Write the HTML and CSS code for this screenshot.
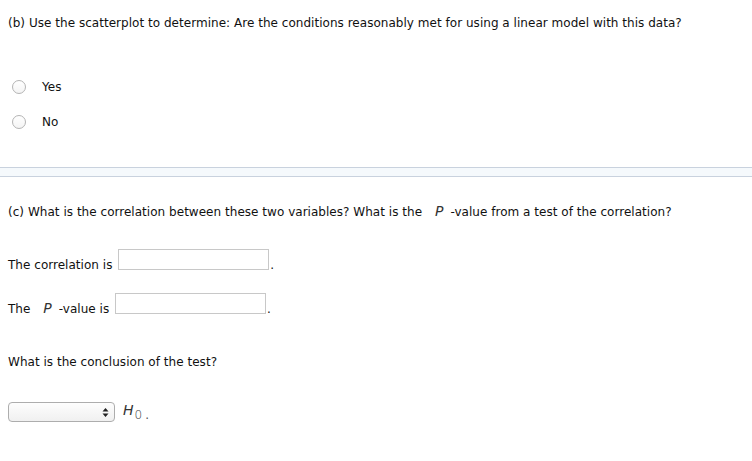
FILE: index.html
```html
<!DOCTYPE html>
<html>
<head>
<meta charset="utf-8">
<link rel="stylesheet" href="styles.css">
</head>
<body>
<div class="part part-b">
  <p class="question">(b) Use the scatterplot to determine: Are the conditions reasonably met for using a linear model with this data?</p>
  <div class="options">
    <label class="option"><span class="radio"></span><span>Yes</span></label>
    <label class="option"><span class="radio"></span><span>No</span></label>
  </div>
</div>
<div class="divider"></div>
<div class="part part-c">
  <p class="question">(c) What is the correlation between these two variables? What is the <span class="math">P</span>-value from a test of the correlation?</p>
  <div class="row row-corr">The correlation is <span class="box"></span><span class="dot">.</span></div>
  <div class="row row-p">The <span class="math">P</span>-value is <span class="box"></span><span class="dot">.</span></div>
  <p class="question q-conc">What is the conclusion of the test?</p>
  <div class="row-sel">
    <span class="select"><svg class="arrows" width="7" height="11" viewBox="0 0 7 11"><path d="M3.5 1 L6.5 4.5 L0.5 4.5 Z M3.5 10 L6.5 6.5 L0.5 6.5 Z" fill="#222"/></svg></span>
    <span class="h0"><i>H</i><sub>0</sub></span><span class="dot2">.</span>
  </div>
</div>
</body>
</html>
```
FILE: styles.css
```css
html, body {
  margin: 0;
  padding: 0;
  background: #fff;
}
body {
  font-family: Verdana, "DejaVu Sans", sans-serif;
  font-size: 12px;
  letter-spacing: 0.03px;
  color: #111;
}
.question {
  margin: 0;
  line-height: 16px;
}
.part-b {
  padding: 15px 8px 0 8px;
  height: 152px;
}
.options {
  margin-top: 48px;
  display: flex;
  flex-direction: column;
  gap: 19px;
}
.option {
  display: flex;
  align-items: center;
  height: 16px;
}
.radio {
  width: 12px;
  height: 12px;
  border: 1px solid #b4b4b4;
  border-radius: 50%;
  margin-left: 4px;
  margin-right: 16px;
  background: linear-gradient(#fff, #f4f4f4);
}
.divider {
  height: 8px;
  background: #f5f9fc;
  border-top: 1px solid #c9d2de;
  border-bottom: 1px solid #c9d2de;
}
.part-c {
  padding: 26px 7px 0 8px;
}
.math {
  font-family: "DejaVu Sans", sans-serif;
  font-style: italic;
  font-weight: 200;
  color: #333;
  margin: 0 7px 0 9px;
  font-size: 14px;
}
.row {
  white-space: pre;
  line-height: 16px;
}
.row-corr {
  margin-top: 29px;
}
.row-p {
  margin-top: 20px;
}
.box {
  display: inline-block;
  width: 149px;
  height: 19px;
  border: 1px solid #c8c8c8;
  background: #fff;
  margin-left: 2px;
  vertical-align: -1px;
}
.dot {
  margin-left: 1px;
}
.q-conc {
  margin-top: 37px;
}
.row-sel {
  margin-top: 32px;
  display: flex;
  align-items: center;
}
.select {
  width: 100px;
  height: 18px;
  border: 1px solid #adadad;
  border-radius: 4px;
  background: linear-gradient(#fdfdfd, #f0f0f0);
  display: flex;
  justify-content: flex-end;
  align-items: center;
  padding-right: 5px;
}
.h0 {
  font-family: "DejaVu Sans", sans-serif;
  font-weight: 200;
  color: #333;
  margin-left: 8px;
  font-size: 14px;
}
.h0 i {
  font-style: italic;
}
.h0 sub {
  font-size: 12px;
  font-style: normal;
  vertical-align: -4px;
  margin-left: 1px;
}
.dot2 {
  margin-left: 3px;
  color: #555;
  align-self: flex-end;
}
```
